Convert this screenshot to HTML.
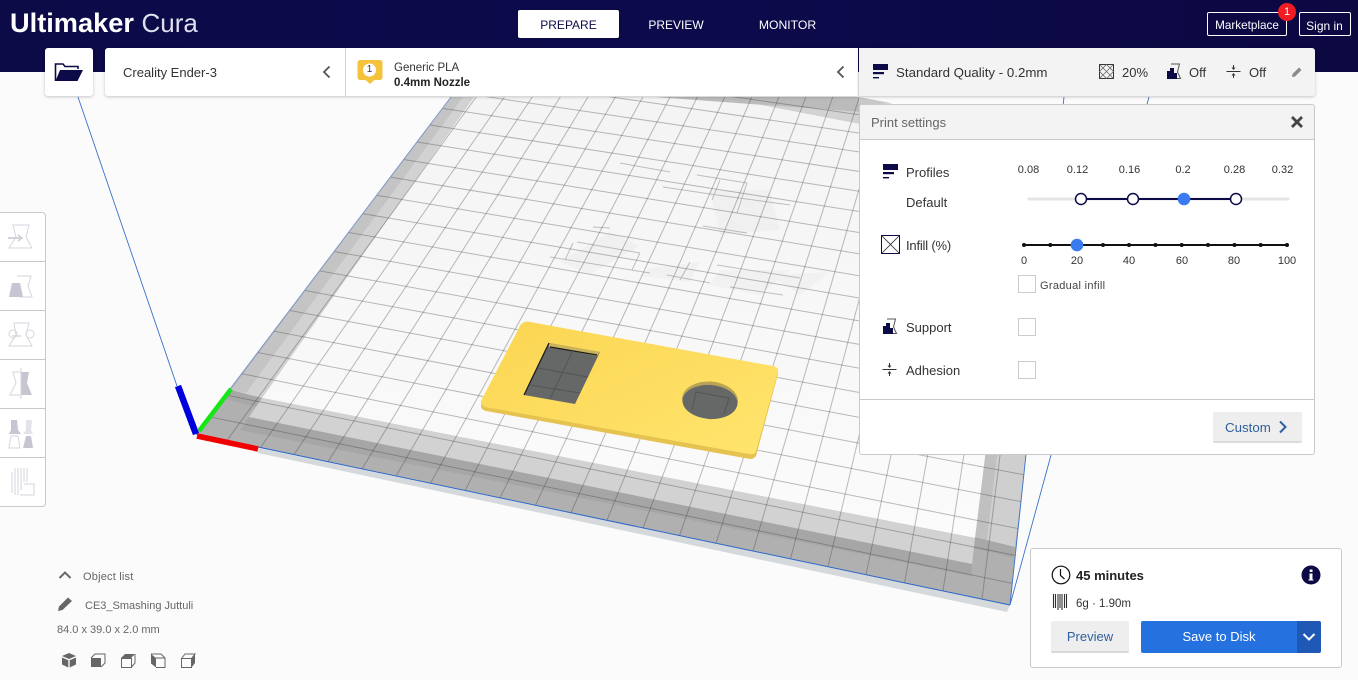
<!DOCTYPE html>
<html><head><meta charset="utf-8"><title>Ultimaker Cura</title>
<style>
html,body{margin:0;padding:0;width:1358px;height:680px;overflow:hidden;background:#fbfbfb;font-family:"Liberation Sans","DejaVu Sans",sans-serif;color:#333}
.a{position:absolute}
.t{position:absolute;white-space:nowrap;line-height:16px;height:16px;margin-top:2px}
.c{transform:translateX(-50%)}
svg{position:absolute;overflow:visible}
</style></head><body>
<div class="a" style="left:0;top:0;width:1358px;height:680px;overflow:hidden">
<svg width="1358" height="680" style="left:0;top:0">
<defs>
<clipPath id="bed"><polygon points="196,434 1010,605 1064,97 451,97"/></clipPath>
<linearGradient id="w" x1="0" y1="0" x2="0" y2="1"><stop offset="0" stop-color="#f4f4f4"/><stop offset="1" stop-color="#fbfbfb"/></linearGradient>
<linearGradient id="y" x1="0" y1="0" x2="1" y2="1"><stop offset="0" stop-color="#fbd552"/><stop offset="1" stop-color="#ffe56e"/></linearGradient>
</defs>
<polygon points="258,448 1010,605 1007,612 258,453" fill="#d6d9dc"/>
<polygon points="196,434 1010,605 1064,97 451,97" fill="#b0b0b0"/>
<polygon points="249,417 972,564 972,576 240,430" fill="#a6a6a6"/>
<polygon points="975,537 1015,547 1013,558 973,548" fill="#a8a8a8"/>
<polygon points="231,390 262,397 258,407 224,399" fill="#a8a8a8"/>
<polygon points="451,97 474,97 262,398 231,390" fill="#d2d2d2"/>
<polygon points="451,97 463,97 246,393 231,390" fill="#c4c4c4"/>
<polygon points="975,537 1015,547 1026,455 985,455" fill="#cfcfcf"/>
<polygon points="975,537 987,540 997,455 985,455" fill="#c0c0c0"/>
<polygon points="474,97 1000,97 985,457 975,538 262,398" fill="url(#w)"/>
<polygon points="262,398 975,538 972,564 249,417" fill="#d2d2d2"/>
<polygon points="720,97 860,124 860,112 656,97" fill="#d2d2d2"/>
<polygon points="656,97 860,97 860,112" fill="#bbbbbb"/>
<g fill="#e6e6e6" opacity=".35">
<polygon points="560,262 610,232 640,246 590,274"/><polygon points="650,268 700,262 690,282 640,276"/><polygon points="720,270 790,270 760,295 710,285"/><polygon points="710,190 770,190 780,230 720,235"/><polygon points="770,275 830,272 800,295"/>
</g>
<g clip-path="url(#bed)" stroke="#3c3c3c" stroke-opacity=".34" stroke-width="1" fill="none">
<path d="M-5900 -851L1400 663.8M-5900 -851L1400 633.7M-5900 -851L1400 604.7M-5900 -851L1400 575.7M-5900 -851L1400 546.8M-5900 -851L1400 518.8M-5900 -851L1400 492M-5900 -851L1400 465.7M-5900 -851L1400 440M-5900 -851L1400 414.7M-5900 -851L1400 390M-5900 -851L1400 365.9M-5900 -851L1400 342.2M-5900 -851L1400 319.2M-5900 -851L1400 296.6M-5900 -851L1400 274.6M-5900 -851L1400 253.2M-5900 -851L1400 232.2M-5900 -851L1400 211.8M-5900 -851L1400 192M-5900 -851L1400 172.6M-5900 -851L1400 153.8M-5900 -851L1400 135.6M-5900 -851L1400 117.4"/>
<path d="M1164 -851L982 599M1164 -851L943 591M1164 -851L904.5 583M1164 -851L866 574.7M1164 -851L828 566.7M1164 -851L790.5 558.8M1164 -851L753 551M1164 -851L716 543.2M1164 -851L679.5 535.5M1164 -851L643 527.9M1164 -851L607 520.3M1164 -851L571 512.8M1164 -851L535.5 505.3M1164 -851L500 497.8M1164 -851L465 490.5M1164 -851L430.5 483.2M1164 -851L396 476M1164 -851L362 468.9M1164 -851L328 461.7M1164 -851L294 454.6M1164 -851L260.5 447.5M1164 -851L227 440.5"/>
</g>
<g stroke="#555" stroke-opacity=".35" stroke-width="1" fill="none">
<path d="M620 163L670 172M697 175L747 183M663 187L717 195L790 205M593 227L610 228M703 226L747 233M577 242L640 253M550 257L650 273M667 275L710 283M717 265L800 278M730 287L783 295M573 243L565 260M747 183L737 213M720 180L712 200M640 253L632 270M690 262L680 280"/>
</g>
<rect x="859" y="96" width="456" height="9" fill="#fbfbfb"/>
<polygon points="859,97 893,103.5 859,105" fill="#c8c8c8"/>
<!-- bed outlines -->
<path d="M196 434L451 97" stroke="#7d99c4" stroke-width="1" fill="none"/>
<path d="M196 434L1010 605" stroke="#2a66c8" stroke-width="1" fill="none"/>
<path d="M1010 605L1064 97M1010 605L1149 97M78 97L177 386" stroke="#3a72c8" stroke-width=".9" fill="none"/>
<!-- plate -->
<path d="M481 402L481 407Q482 410 486 411L750 459Q754 459 756 456L778 374L778 368L755 452L481 402Z" fill="#e6c350"/>
<path d="M523 323Q525 321 530 322L773 366Q779 367 778 372L756 451Q755 455 749 454L485 407Q480 405 481 401L520 326Q521 324 523 323Z" fill="url(#y)"/>
<polygon points="549,343 600,352 575,404 524,395" fill="#666868"/>
<path d="M549 347L597 356L600 352L549 343Z" fill="#c9b35a"/>
<path d="M549 343L524 395" stroke="#1c1c1c" stroke-width="1.3"/>
<path d="M550 347L597 355" stroke="#1c1c1c" stroke-width="1.2"/>
<path d="M538 368L588 377M530 385L580 393M573 350L550 399" stroke="#535454" stroke-width="1"/>
<ellipse cx="710" cy="400" rx="28" ry="18.5" transform="rotate(4 710 400)" fill="#b9a455"/>
<ellipse cx="710" cy="402" rx="27.5" ry="17" transform="rotate(4 710 402)" fill="#666868"/>
<path d="M696 392L729 398L724 414M696 392L692 410" stroke="#535454" stroke-width="1" fill="none"/>
<!-- axes -->
<path d="M178 386L196 434" stroke="#0000dd" stroke-width="6.5"/>
<path d="M199 431L231 389" stroke="#16e616" stroke-width="4.5"/>
<path d="M197 436L258 449" stroke="#f00000" stroke-width="5.5"/>
</svg>

<!-- header -->
<div class="a" style="left:0;top:0;width:1358px;height:72px;background:linear-gradient(90deg,#0c0a47,#0d0a4c 50%,#0b0842)"></div>
<div class="t" style="left:10px;top:6px;height:30px;line-height:30px;font-size:27.2px;font-weight:bold;color:#fff">Ultimaker</div>
<div class="t" style="left:141.5px;top:6px;height:30px;line-height:30px;font-size:26px;color:#dfe0ee">Cura</div>
<div class="a" style="left:518px;top:10px;width:101px;height:28px;background:#fff;border-radius:2px"></div>
<div class="t c" style="left:568.5px;top:15px;font-size:12px;color:#0c0a47">PREPARE</div>
<div class="t c" style="left:676px;top:15px;font-size:12px;color:#fff">PREVIEW</div>
<div class="t c" style="left:787.5px;top:15px;font-size:12.2px;color:#fff">MONITOR</div>
<div class="a" style="left:1207px;top:12px;width:78px;height:22px;border:1px solid #fff;border-radius:2px"></div>
<div class="t c" style="left:1247px;top:16px;font-size:11.7px;color:#fff">Marketplace</div>
<div class="a" style="left:1299px;top:12px;width:50px;height:22px;border:1px solid #fff;border-radius:2px"></div>
<div class="t c" style="left:1324.5px;top:16px;font-size:12px;color:#fff">Sign in</div>
<div class="a" style="left:1278px;top:3px;width:18px;height:18px;border-radius:50%;background:#f01c24"></div>
<div class="t c" style="left:1287px;top:2px;font-size:11px;color:#fff">1</div>

<!-- toolbar -->
<div class="a" style="left:45px;top:48px;width:48px;height:48px;background:#fff;border-radius:3px;box-shadow:0 1px 3px rgba(0,0,0,.22)"></div>
<svg width="30" height="22" style="left:54px;top:61px"><path d="M1.5 20V3H9L11 5.5H24V8" fill="none" stroke="#0c0a47" stroke-width="1.6"/><path d="M6 9H29L23.5 20H1.5Z" fill="#0c0a47"/></svg>
<div class="a" style="left:105px;top:48px;width:753px;height:48px;background:#fff;border-radius:3px 0 0 3px;box-shadow:0 1px 3px rgba(0,0,0,.22)"></div>
<div class="a" style="left:345px;top:48px;width:1px;height:48px;background:#d2d2d2"></div>
<div class="t" style="left:123px;top:63px;font-size:13px;color:#333">Creality Ender-3</div>
<svg width="10" height="14" style="left:322px;top:65px"><path d="M7.5 1.5L2 7L7.5 12.5" fill="none" stroke="#555" stroke-width="1.8"/></svg>
<svg width="10" height="14" style="left:836px;top:65px"><path d="M7.5 1.5L2 7L7.5 12.5" fill="none" stroke="#555" stroke-width="1.8"/></svg>
<svg width="26" height="26" style="left:357px;top:60px"><path d="M3 0H22Q25 0 25 3V17Q25 20 22 20H17L12.5 24L8 20H3Q0 20 0 17V3Q0 0 3 0Z" fill="#f5c33b" transform="translate(.5 0)"/><circle cx="12.5" cy="10" r="6.5" fill="#fff"/></svg>
<div class="t c" style="left:369.5px;top:60px;font-size:10px;color:#333">1</div>
<div class="t" style="left:394px;top:58px;font-size:11.5px;color:#333">Generic PLA</div>
<div class="t" style="left:394px;top:73px;font-size:11.5px;font-weight:bold;color:#222">0.4mm Nozzle</div>

<div class="a" style="left:859px;top:48px;width:456px;height:48px;background:#f3f3f3;border-radius:0 3px 3px 0;box-shadow:0 1px 3px rgba(0,0,0,.22)"></div>
<svg width="16" height="16" style="left:873px;top:64px"><rect x="0" y="0" width="15" height="6" fill="#0c0a47"/><rect x="0" y="8" width="11" height="2.2" fill="#0c0a47"/><rect x="0" y="13" width="6" height="1.4" fill="#0c0a47"/></svg>
<div class="t" style="left:896px;top:63px;font-size:13.3px;color:#333">Standard Quality - 0.2mm</div>
<svg width="16" height="16" style="left:1099px;top:64px"><rect x=".5" y=".5" width="14" height="14" fill="none" stroke="#333"/><path d="M.5 7.5L7.5 .5L14.5 7.5L7.5 14.5ZM.5 .5L14.5 14.5M14.5 .5L.5 14.5" fill="none" stroke="#666" stroke-width=".8"/></svg>
<div class="t" style="left:1122px;top:63px;font-size:13px;color:#333">20%</div>
<svg width="16" height="17" style="left:1166px;top:63px"><path d="M5 1H13.5L11.5 9L14.5 15.5H11" fill="none" stroke="#555"/><path d="M1 16V8H4V5H8V10H11V16Z" fill="#0c0a47"/></svg>
<div class="t" style="left:1189px;top:63px;font-size:13px;color:#333">Off</div>
<svg width="16" height="16" style="left:1226px;top:64px"><path d="M.5 7.5H14.5" stroke="#333"/><path d="M7.5 1V5M7.5 10V14" stroke="#333"/><path d="M5.5 3.5L7.5 6L9.5 3.5ZM5.5 11.5L7.5 9L9.5 11.5Z" fill="#333"/></svg>
<div class="t" style="left:1249px;top:63px;font-size:13px;color:#333">Off</div>
<svg width="12" height="12" style="left:1291px;top:66px"><path d="M1 11L1.5 8L8 1.5L10.5 4L4 10.5Z" fill="#8a8a8a"/></svg>

<!-- print settings -->
<div class="a" style="left:859px;top:104px;width:454px;height:349px;background:#fff;border:1px solid #c9c9c9;border-radius:3px"></div>
<div class="a" style="left:860px;top:105px;width:454px;height:34px;background:#f3f3f3;border-bottom:1px solid #c9c9c9;border-radius:3px 3px 0 0"></div>
<div class="t" style="left:871px;top:113px;font-size:13px;color:#666">Print settings</div>
<svg width="14" height="14" style="left:1290px;top:115px"><path d="M2 2L12 12M12 2L2 12" stroke="#444" stroke-width="2.8"/></svg>

<svg width="16" height="16" style="left:883px;top:164px"><rect x="0" y="0" width="15" height="6" fill="#0c0a47"/><rect x="0" y="8" width="11" height="2.2" fill="#0c0a47"/><rect x="0" y="13" width="6" height="1.4" fill="#0c0a47"/></svg>
<div class="t" style="left:906px;top:163px;font-size:13px">Profiles</div>
<div class="t" style="left:906px;top:193px;font-size:13px">Default</div>
<svg width="20" height="20" style="left:881px;top:235px"><rect x=".5" y=".5" width="18" height="18" fill="none" stroke="#0c0a47"/><path d="M.5 .5L18.5 18.5M18.5 .5L.5 18.5" fill="none" stroke="#333" stroke-width=".8"/></svg>
<div class="t" style="left:906px;top:236px;font-size:13px;letter-spacing:-.2px">Infill (%)</div>
<svg width="16" height="17" style="left:882px;top:318px"><path d="M5 1H13.5L11.5 9L14.5 15.5H11" fill="none" stroke="#555"/><path d="M1 16V8H4V5H8V10H11V16Z" fill="#0c0a47"/></svg>
<div class="t" style="left:906px;top:318px;font-size:13px">Support</div>
<svg width="16" height="16" style="left:882px;top:362px"><path d="M.5 7.5H14.5" stroke="#333"/><path d="M7.5 1V5M7.5 10V14" stroke="#333"/><path d="M5.5 3.5L7.5 6L9.5 3.5ZM5.5 11.5L7.5 9L9.5 11.5Z" fill="#333"/></svg>
<div class="t" style="left:906px;top:361px;font-size:13px">Adhesion</div>

<div class="t c" style="left:1028.5px;top:160px;font-size:11px">0.08</div>
<div class="t c" style="left:1077.5px;top:160px;font-size:11px">0.12</div>
<div class="t c" style="left:1129.5px;top:160px;font-size:11px">0.16</div>
<div class="t c" style="left:1183px;top:160px;font-size:11px">0.2</div>
<div class="t c" style="left:1234.5px;top:160px;font-size:11px">0.28</div>
<div class="t c" style="left:1282.5px;top:160px;font-size:11px">0.32</div>
<svg width="1358" height="680" style="left:0;top:0;pointer-events:none">
<path d="M1029 199H1288" stroke="#e4e4e4" stroke-width="3" stroke-linecap="round"/>
<path d="M1081 199H1236" stroke="#0c0a47" stroke-width="2"/>
<circle cx="1081" cy="199" r="5.5" fill="#fff" stroke="#0c0a47" stroke-width="1.5"/>
<circle cx="1133" cy="199" r="5.5" fill="#fff" stroke="#0c0a47" stroke-width="1.5"/>
<circle cx="1236" cy="199" r="5.5" fill="#fff" stroke="#0c0a47" stroke-width="1.5"/>
<circle cx="1184" cy="199" r="6.3" fill="#3a7cf0"/>
<path d="M1024 245H1287" stroke="#111" stroke-width="2"/>
<g fill="#111"><circle cx="1024" cy="245" r="2"/><circle cx="1050.3" cy="245" r="2"/><circle cx="1103" cy="245" r="2"/><circle cx="1129" cy="245" r="2"/><circle cx="1155.5" cy="245" r="2"/><circle cx="1181.7" cy="245" r="2"/><circle cx="1208" cy="245" r="2"/><circle cx="1234.5" cy="245" r="2"/><circle cx="1260.7" cy="245" r="2"/><circle cx="1287" cy="245" r="2"/></g>
<circle cx="1077" cy="245" r="6.3" fill="#3a7cf0"/>
</svg>
<div class="t c" style="left:1024px;top:251px;font-size:11px">0</div>
<div class="t c" style="left:1077px;top:251px;font-size:11px">20</div>
<div class="t c" style="left:1129px;top:251px;font-size:11px">40</div>
<div class="t c" style="left:1182px;top:251px;font-size:11px">60</div>
<div class="t c" style="left:1234px;top:251px;font-size:11px">80</div>
<div class="t c" style="left:1287px;top:251px;font-size:11px">100</div>
<div class="a" style="left:1018px;top:275px;width:16px;height:16px;border:1px solid #ccc"></div>
<div class="t" style="left:1040px;top:276px;font-size:11px;color:#444;letter-spacing:.3px">Gradual infill</div>
<div class="a" style="left:1018px;top:318px;width:16px;height:16px;border:1px solid #ccc"></div>
<div class="a" style="left:1018px;top:361px;width:16px;height:16px;border:1px solid #ccc"></div>
<div class="a" style="left:860px;top:399px;width:454px;height:1px;background:#c9c9c9"></div>
<div class="a" style="left:1213px;top:412px;width:89px;height:29px;background:#eeeeee;border-bottom:2px solid #dcdcdc;border-radius:2px"></div>
<div class="t" style="left:1225px;top:418px;font-size:13.3px;color:#2f5f9e">Custom</div>
<svg width="10" height="14" style="left:1278px;top:420px"><path d="M2 1.5L7.5 7L2 12.5" fill="none" stroke="#2f5f9e" stroke-width="2"/></svg>

<!-- left tools -->
<div class="a" style="left:-3px;top:212px;width:47px;height:293px;background:#fff;border:1px solid #c9c9c9;border-radius:4px"></div>
<div class="a" style="left:0;top:261px;width:45px;height:1px;background:#c9c9c9"></div>
<div class="a" style="left:0;top:310px;width:45px;height:1px;background:#c9c9c9"></div>
<div class="a" style="left:0;top:359px;width:45px;height:1px;background:#c9c9c9"></div>
<div class="a" style="left:0;top:408px;width:45px;height:1px;background:#c9c9c9"></div>
<div class="a" style="left:0;top:457px;width:45px;height:1px;background:#c9c9c9"></div>
<svg width="46" height="300" style="left:0;top:210px" fill="none" stroke="#d6d6de" stroke-width="1">
<path d="M13 15H29L26 27L32 38H9L16 27Z"/><path d="M8 28H20M18 25L22 28L18 31" stroke="#c6c6d0" stroke-width="1.4"/>
<path d="M17 66H31L28 76L32 87H20"/><path d="M12 73H20L23 87H9Z" fill="#c6c6d2" stroke="none"/>
<path d="M14 113H29L26 125L32 136H9L16 125Z"/><circle cx="13" cy="124" r="4"/><circle cx="30" cy="124" r="4"/><path d="M12 126H21" stroke-width="1.4"/>
<path d="M21 162H13L16 173L10 185H21"/><path d="M21 162H29L27 173L32 185H21Z" fill="#c6c6d2" stroke="none"/><path d="M21 158V189"/>
<path d="M11 210H17L18 220L21 224H9L11 220Z" fill="#c6c6d2" stroke="none"/><path d="M26 210H32L31 220L33 224H23L26 220Z" fill="#e2e2e8" stroke="none"/>
<path d="M11 226H18L20 238H9Z"/><path d="M26 226H31L33 238H23Z" fill="#c6c6d2" stroke="none"/>
<path d="M12 262V283M15 258V285M18 258V285M21 258V280M24 258V272M27 258V272"/><path d="M24 274H34V285H20"/>
</svg>

<!-- object list -->
<svg width="14" height="10" style="left:58px;top:570px"><path d="M1.5 8L7 2.5L12.5 8" fill="none" stroke="#666" stroke-width="2"/></svg>
<div class="t" style="left:83px;top:567px;font-size:11px;color:#666;letter-spacing:.2px">Object list</div>
<svg width="16" height="16" style="left:57px;top:596px"><path d="M1 15L2 10.5L11 1.5L15 5L5.5 14Z" fill="#666"/></svg>
<div class="t" style="left:85px;top:596px;font-size:11px;color:#666">CE3_Smashing Juttuli</div>
<div class="t" style="left:57px;top:620px;font-size:11px;color:#666">84.0 x 39.0 x 2.0 mm</div>
<svg width="150" height="20" style="left:60px;top:651px">
<path d="M9 2L16 5L9 8L2 5Z" fill="#666"/><path d="M2 6.5L8.3 9.2V16.5L2 13.5ZM16 6.5L9.7 9.2V16.5L16 13.5Z" fill="#666"/>
<path d="M31 7H41V16H31Z" fill="#666"/><path d="M31 7L35 3H45V12L41 16" fill="none" stroke="#666"/>
<path d="M61.5 7.5H71.5V16.5H61.5Z" fill="none" stroke="#666"/><path d="M61 7L65 3H75L71 7Z" fill="#666"/><path d="M75 3V12L71.5 16" fill="none" stroke="#666"/>
<path d="M91 3L96 7V16.5L91 12.5Z" fill="#666"/><path d="M91 3H101L105 7V16.5H96M96 7H105" fill="none" stroke="#666"/>
<path d="M121.5 7.5H131.5V16.5H121.5ZM121.5 7.5L125 3H135L131.5 7.5" fill="none" stroke="#666"/><path d="M131.5 7.5L135 3V12L131.5 16.5Z" fill="#666"/>
</svg>

<!-- print panel -->
<div class="a" style="left:1030px;top:548px;width:310px;height:118px;background:#fff;border:1px solid #c9c9c9;border-radius:3px"></div>
<svg width="20" height="20" style="left:1051px;top:565px"><circle cx="10" cy="10" r="8.8" fill="none" stroke="#111" stroke-width="1.2"/><path d="M9.5 4V10.5L13.5 14" fill="none" stroke="#111" stroke-width="1.2"/></svg>
<div class="t" style="left:1076px;top:566px;font-size:13px;font-weight:bold;color:#222">45 minutes</div>
<svg width="20" height="20" style="left:1301px;top:565px"><circle cx="10" cy="10" r="9.5" fill="#0c0a47"/><path d="M8.5 8.5H11.5V14.5H12.5V15.5H7.5V14.5H8.5ZM8.7 4.5H11.5V7H8.7Z" fill="#fff"/></svg>
<svg width="16" height="18" style="left:1052px;top:593px"><path d="M1.5 1V15M3.5 1V15M6 1V17M8 1V15M10 1V17M12.5 1V15M14.5 1V15" stroke="#333" stroke-width="1.1"/></svg>
<div class="t" style="left:1076px;top:594px;font-size:11.5px;color:#333">6g · 1.90m</div>
<div class="a" style="left:1051px;top:621px;width:78px;height:30px;background:#eeeeee;border-bottom:2px solid #d8d8d8;border-radius:2px"></div>
<div class="t c" style="left:1090px;top:627px;font-size:13px;color:#2f5f9e">Preview</div>
<div class="a" style="left:1141px;top:621px;width:156px;height:32px;background:#2671e0;border-radius:2px 0 0 2px"></div>
<div class="a" style="left:1297px;top:621px;width:24px;height:32px;background:#1f59b5;border-radius:0 2px 2px 0"></div>
<div class="t c" style="left:1219px;top:627px;font-size:13px;color:#fff">Save to Disk</div>
<svg width="14" height="10" style="left:1302px;top:632px"><path d="M1.5 2L7 7.5L12.5 2" fill="none" stroke="#fff" stroke-width="2"/></svg>
</div>
</body></html>
